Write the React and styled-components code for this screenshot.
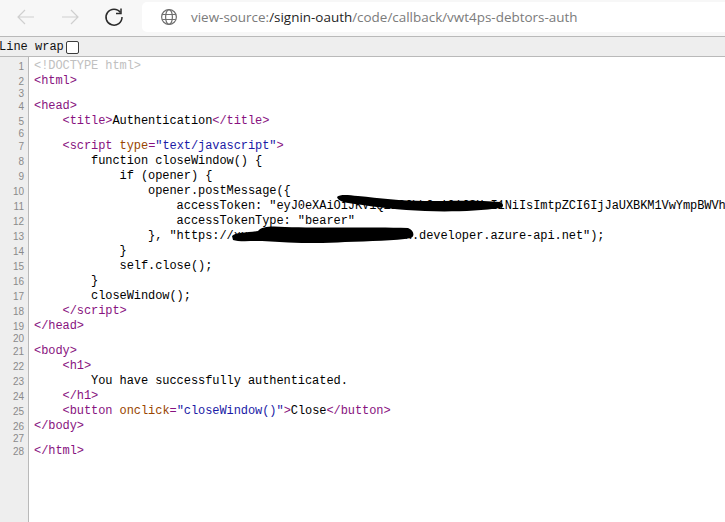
import React from 'react';
import styled, { createGlobalStyle } from 'styled-components';

const GlobalStyle = createGlobalStyle`
  html, body {
    margin: 0;
    background: #fff;
    overflow: hidden;
  }
`;

const Page = styled.div`
  position: relative;
  height: 522px;
  display: flex;
  flex-direction: column;
  overflow: hidden;
`;

const BrowserBar = styled.div`
  height: 34px;
  flex: none;
  display: flex;
  align-items: flex-start;
  padding: 2px 0 0 4px;
  background: #f7f7f7;
  border-bottom: 1px solid #b9b9b9;
`;

const NavButton = styled.div`
  width: 44px;
  height: 29px;
  flex: none;
  display: flex;
  align-items: center;
  justify-content: center;
  color: ${(p) => (p.$disabled ? '#cfcfcf' : '#2b2b2b')};
`;

const AddressBar = styled.div`
  flex: 1;
  height: 30px;
  margin-left: 6px;
  padding-left: 18px;
  display: flex;
  align-items: center;
  gap: 13px;
  background: #fff;
  border-radius: 5px 0 0 5px;
  font: 13.45px "Open Sans", "Liberation Sans", sans-serif;
  color: #7b7b7b;
  white-space: nowrap;
`;

const UrlDark = styled.span`
  color: #1f1f1f;
`;

const WrapBar = styled.div`
  height: 18px;
  flex: none;
  display: flex;
  align-items: center;
  padding-top: 1px;
  background: #eeeeee;
  border-bottom: 1px solid #b9b9b9;
  font: 12px "Liberation Mono", monospace;
  color: #111;
`;

const WrapLabel = styled.label`
  margin-left: -1px;
  display: flex;
  align-items: center;
  white-space: pre;
`;

const WrapBox = styled.span`
  width: 11px;
  height: 11px;
  margin-left: 2px;
  border: 1px solid #3c3c3c;
  border-radius: 2px;
  background: #fff;
`;

const Source = styled.div`
  flex: 1;
  display: flex;
  flex-direction: column;
  min-height: 0;
`;

const Row = styled.div`
  display: flex;
  height: ${(p) => (p.$empty ? '10px' : '15px')};
  flex: none;
`;

const TopGap = styled.div`
  display: flex;
  height: 2px;
  flex: none;
`;

const Filler = styled.div`
  flex: 1;
  display: flex;
`;

const Gutter = styled.div`
  width: 29px;
  flex: none;
  box-sizing: border-box;
  padding-right: 4px;
  background: #eeeeee;
  border-right: 1px solid #b9b9b9;
  text-align: right;
  font: 10px "Liberation Sans", sans-serif;
  color: #8a8a8a;
  line-height: ${(p) => (p.$empty ? '10px' : '15px')};
`;

const Code = styled.div`
  padding-left: 5px;
  font: 12px/15px "Liberation Mono", monospace;
  letter-spacing: -0.07px;
  color: #000;
  white-space: pre;
`;

const Tag = styled.span`
  color: #881280;
`;

const Doctype = styled.span`
  color: #c0c0c0;
`;

const Attr = styled.span`
  color: #994500;
`;

const Val = styled.span`
  color: #1a1aa6;
`;

const Scribble = styled.svg`
  position: absolute;
  left: 0;
  top: 0;
  pointer-events: none;
`;

const lines = [
  <Doctype>{'<!DOCTYPE html>'}</Doctype>,
  <Tag>{'<html>'}</Tag>,
  null,
  <Tag>{'<head>'}</Tag>,
  <>{'    '}<Tag>{'<title>'}</Tag>Authentication<Tag>{'</title>'}</Tag></>,
  null,
  <>{'    '}<Tag>{'<script '}</Tag><Attr>type</Attr><Tag>=</Tag><Val>"text/javascript"</Val><Tag>{'>'}</Tag></>,
  '        function closeWindow() {',
  '            if (opener) {',
  '                opener.postMessage({',
  '                    accessToken: "eyJ0eXAiOiJKV1QiLCJhbGciOiJSUzI1NiIsImtpZCI6IjJaUXBKM1VwYmpBWVh',
  '                    accessTokenType: "bearer"',
  '                }, "https://xxxxxxxxxxxxxxxxxxxxxxxxx.developer.azure-api.net");',
  '            }',
  '            self.close();',
  '        }',
  '        closeWindow();',
  <>{'    '}<Tag>{'</script>'}</Tag></>,
  <Tag>{'</head>'}</Tag>,
  null,
  <Tag>{'<body>'}</Tag>,
  <>{'    '}<Tag>{'<h1>'}</Tag></>,
  '        You have successfully authenticated.',
  <>{'    '}<Tag>{'</h1>'}</Tag></>,
  <>{'    '}<Tag>{'<button '}</Tag><Attr>onclick</Attr><Tag>=</Tag><Val>"closeWindow()"</Val><Tag>{'>'}</Tag>Close<Tag>{'</button>'}</Tag></>,
  <Tag>{'</body>'}</Tag>,
  null,
  <Tag>{'</html>'}</Tag>,
];

const App = () => (
  <Page>
    <GlobalStyle />
    <BrowserBar>
      <NavButton $disabled>
        <svg width="20" height="20" viewBox="0 0 20 20" fill="none" stroke="currentColor" strokeWidth="1.2">
          <path d="M18 10H2M9 3l-7 7 7 7" />
        </svg>
      </NavButton>
      <NavButton $disabled>
        <svg width="20" height="20" viewBox="0 0 20 20" fill="none" stroke="currentColor" strokeWidth="1.2">
          <path d="M2 10h16M11 3l7 7-7 7" />
        </svg>
      </NavButton>
      <NavButton>
        <svg width="20" height="20" viewBox="0 0 20 20" fill="none" stroke="currentColor" strokeWidth="1.5">
          <path d="M16.5 5.5A8 8 0 1 0 18 10" />
          <path d="M17 1.5v5h-5" />
        </svg>
      </NavButton>
      <AddressBar>
        <svg width="18" height="18" viewBox="0 0 18 18" fill="none" stroke="#6f6f6f" strokeWidth="1.2">
          <circle cx="9" cy="9" r="7.4" />
          <ellipse cx="9" cy="9" rx="3.4" ry="7.4" />
          <path d="M2.2 6.5h13.6M2.2 11.5h13.6" />
        </svg>
        <span>view-source:<UrlDark>/signin-oauth</UrlDark>/code/callback/vwt4ps-debtors-auth</span>
      </AddressBar>
    </BrowserBar>
    <WrapBar>
      <WrapLabel>Line wrap<WrapBox /></WrapLabel>
    </WrapBar>
    <Source>
      <TopGap><Gutter /></TopGap>
      {lines.map((line, i) => (
        <Row key={i} $empty={line === null}>
          <Gutter $empty={line === null}>{i + 1}</Gutter>
          <Code>{line}</Code>
        </Row>
      ))}
      <Filler>
        <Gutter />
      </Filler>
    </Source>
    <Scribble width="725" height="522" viewBox="0 0 725 522">
      <path d="M337 197C340 194 348 195 358 196C380 198 400 201 425 201C450 201 480 200 500 202C504 204 504 207 500 208C480 211 450 212 425 211C400 210 375 207 355 204C345 203 338 201 337 197Z" fill="#000" />
      <path d="M232 236C236 232 248 233 258 231C262 226 272 226 285 227C320 228 370 227 408 228C414 230 415 236 411 238C395 241 370 241 345 242C320 244 290 243 262 241C250 241 238 242 233 240Z" fill="#000" />
    </Scribble>
  </Page>
);

export default App;
